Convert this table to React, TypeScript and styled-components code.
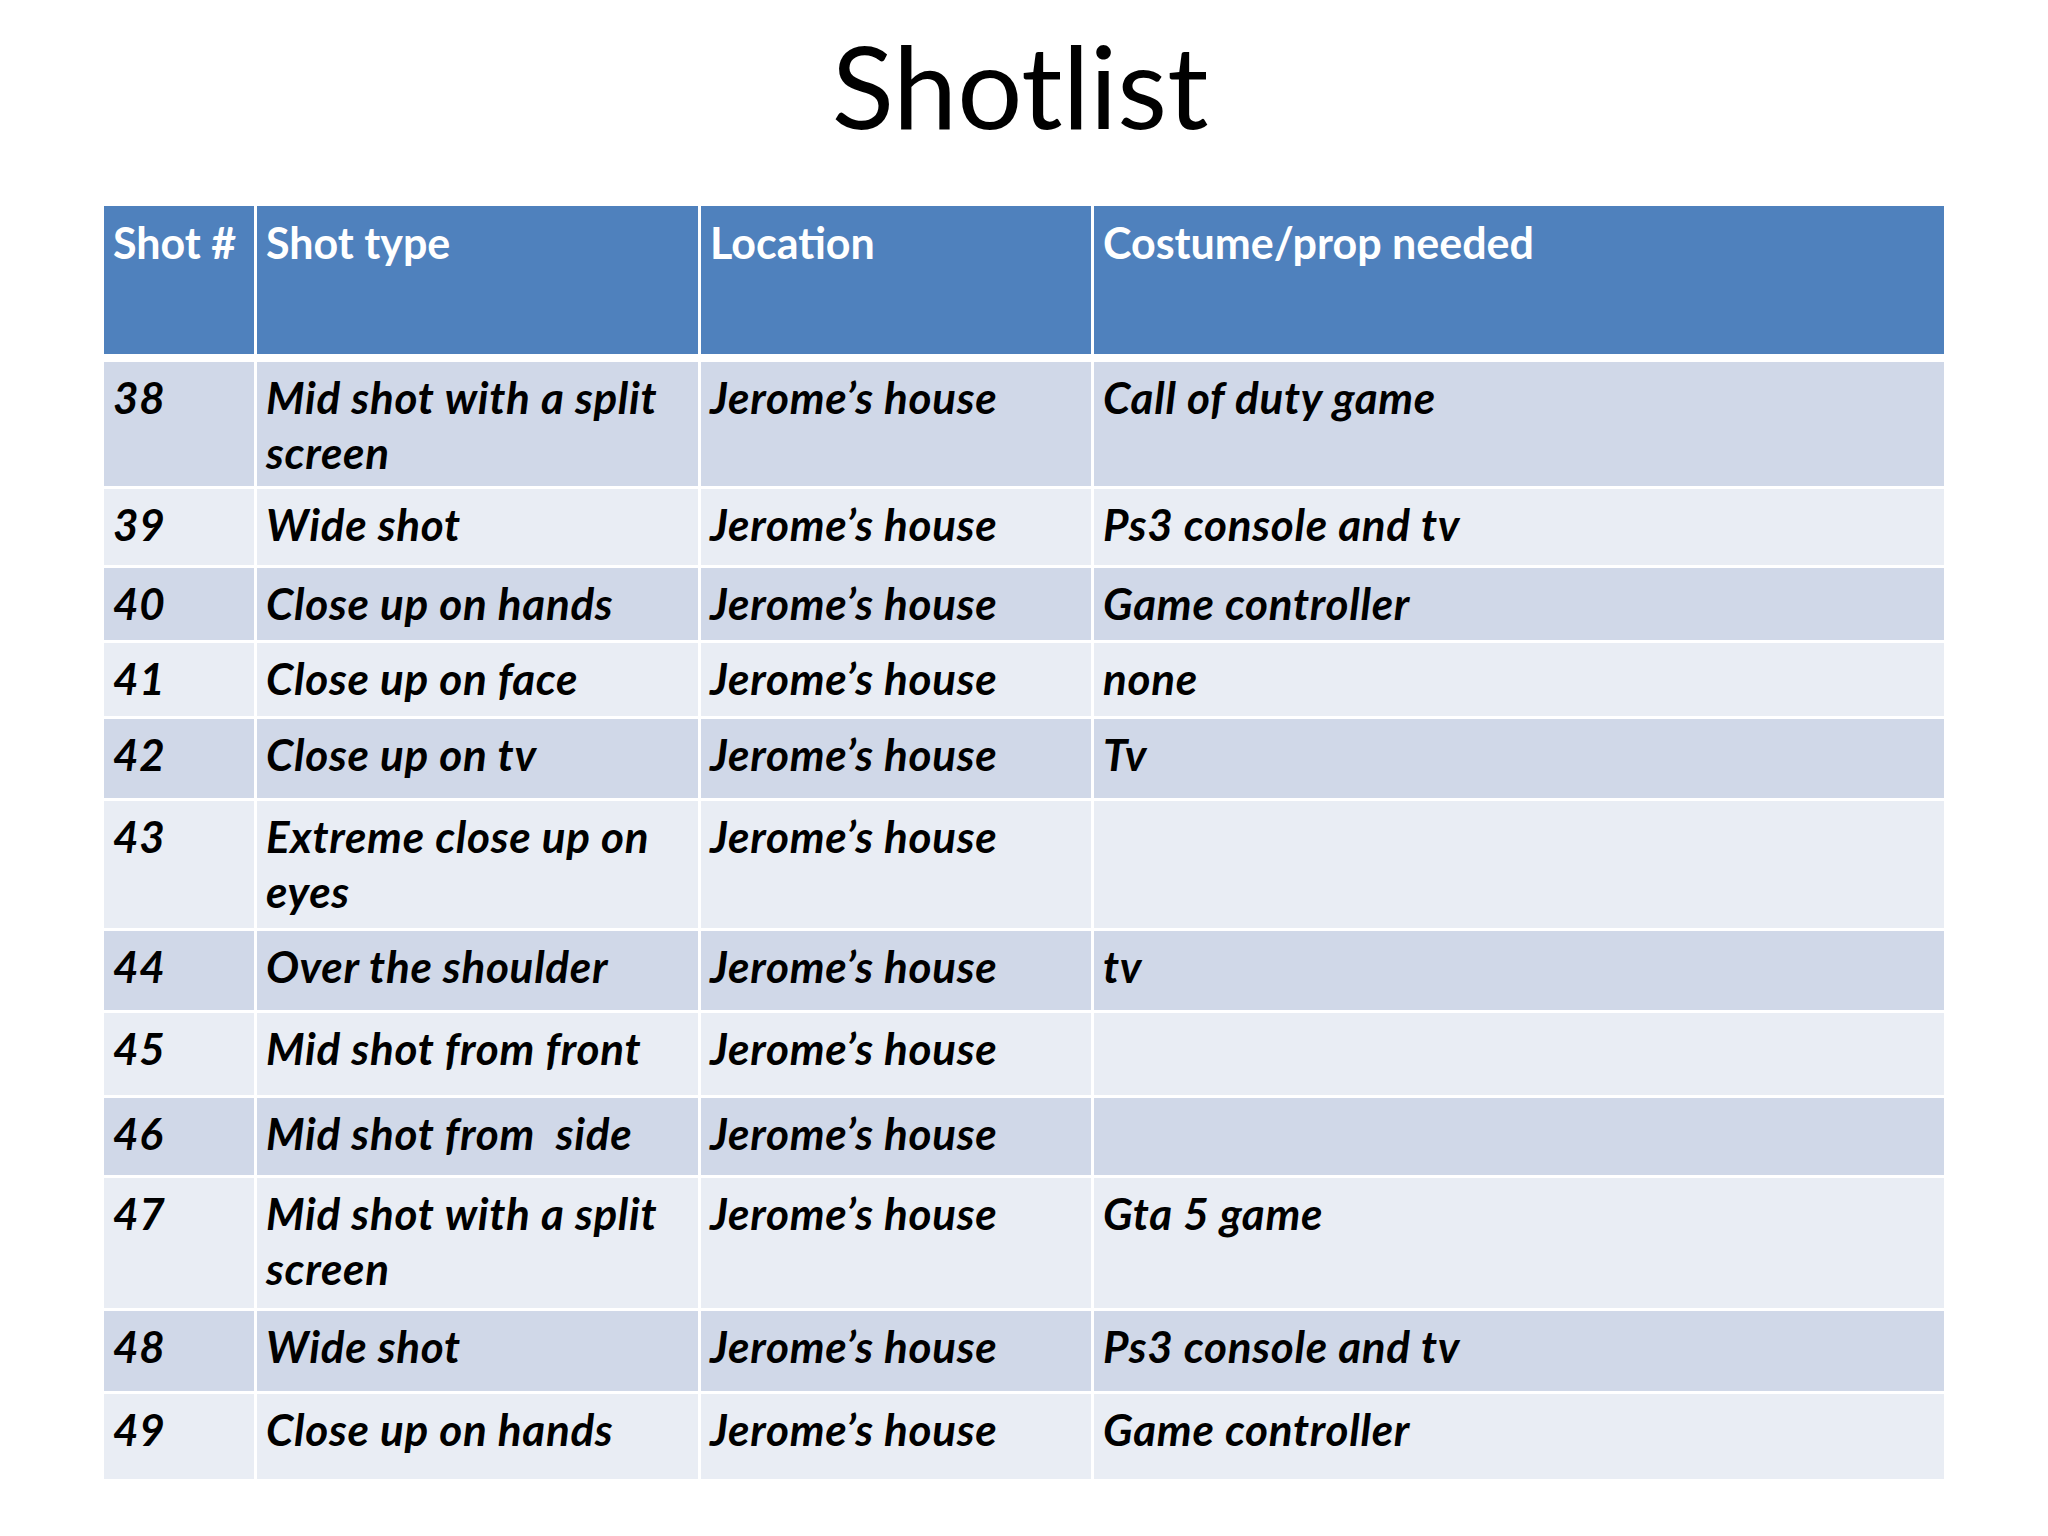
import React from 'react';
import styled, { createGlobalStyle } from 'styled-components';

interface IShot {
  id: number;
  type: string;
  location: string;
  props: string;
  height: number;
}

const shots: IShot[] = [
  { id: 38, type: 'Mid shot with a split screen', location: 'Jerome’s house', props: 'Call of duty game', height: 124 },
  { id: 39, type: 'Wide shot', location: 'Jerome’s house', props: 'Ps3 console and tv', height: 76 },
  { id: 40, type: 'Close up on hands', location: 'Jerome’s house', props: 'Game controller', height: 72 },
  { id: 41, type: 'Close up on face', location: 'Jerome’s house', props: 'none', height: 73 },
  { id: 42, type: 'Close up on tv', location: 'Jerome’s house', props: 'Tv', height: 79 },
  { id: 43, type: 'Extreme close up on eyes', location: 'Jerome’s house', props: '', height: 127 },
  { id: 44, type: 'Over the shoulder', location: 'Jerome’s house', props: 'tv', height: 79 },
  { id: 45, type: 'Mid shot from front', location: 'Jerome’s house', props: '', height: 82 },
  { id: 46, type: 'Mid shot from\u00a0 side', location: 'Jerome’s house', props: '', height: 77 },
  { id: 47, type: 'Mid shot with a split screen', location: 'Jerome’s house', props: 'Gta 5 game', height: 130 },
  { id: 48, type: 'Wide shot', location: 'Jerome’s house', props: 'Ps3 console and tv', height: 80 },
  { id: 49, type: 'Close up on hands', location: 'Jerome’s house', props: 'Game controller', height: 85 },
];

const GlobalStyle = createGlobalStyle`
  html, body {
    margin: 0;
    padding: 0;
    background: #ffffff;
  }
  body {
    font-family: Lato, "Liberation Sans", sans-serif;
  }
`;

const Page = styled.div`
  width: 2048px;
  min-height: 1536px;
  background: #ffffff;
`;

const TitleBar = styled.header`
  height: 206px;
  box-sizing: border-box;
  padding-top: 27px;
  display: flex;
  justify-content: center;
`;

const Title = styled.h1`
  margin: 0 8px 0 0;
  font-family: Lato, "Liberation Sans", sans-serif;
  font-weight: 400;
  font-size: 115px;
  line-height: 114px;
  color: #000000;
`;

const Table = styled.div`
  margin: 0 104px;
  display: flex;
  flex-direction: column;
  gap: 3px;
`;

const Row = styled.div<{ $height: number; $band?: 'head' | 'dark' | 'light' }>`
  display: grid;
  grid-template-columns: 150px 441px 390px 1fr;
  column-gap: 3px;
  height: ${(p) => p.$height}px;
  margin-bottom: ${(p) => (p.$band === 'head' ? '5px' : '0')};
`;

const Cell = styled.div<{ $band: 'head' | 'dark' | 'light' }>`
  box-sizing: border-box;
  padding: ${(p) => (p.$band === 'head' ? '9px 10px 0 9px' : '8px 10px 0 9px')};
  font-size: ${(p) => (p.$band === 'head' ? '43px' : '44px')};
  letter-spacing: ${(p) => (p.$band === 'head' ? '0' : '0.7px')};
  line-height: 55px;
  font-weight: 700;
  font-style: ${(p) => (p.$band === 'head' ? 'normal' : 'italic')};
  color: ${(p) => (p.$band === 'head' ? '#ffffff' : '#000000')};
  background: ${(p) =>
    p.$band === 'head' ? '#4f81bd' : p.$band === 'dark' ? '#d0d8e8' : '#e9edf4'};
`;

export default function App() {
  return (
    <Page>
      <GlobalStyle />
      <TitleBar>
        <Title>Shotlist</Title>
      </TitleBar>
      <Table>
        <Row $height={148} $band="head">
          <Cell $band="head">Shot #</Cell>
          <Cell $band="head">Shot type</Cell>
          <Cell $band="head">Location</Cell>
          <Cell $band="head">Costume/prop needed</Cell>
        </Row>
        {shots.map((shot, index) => {
          const band = index % 2 === 0 ? 'dark' : 'light';
          return (
            <Row key={shot.id} $height={shot.height}>
              <Cell $band={band}>{shot.id}</Cell>
              <Cell $band={band}>{shot.type}</Cell>
              <Cell $band={band}>{shot.location}</Cell>
              <Cell $band={band}>{shot.props}</Cell>
            </Row>
          );
        })}
      </Table>
    </Page>
  );
}
